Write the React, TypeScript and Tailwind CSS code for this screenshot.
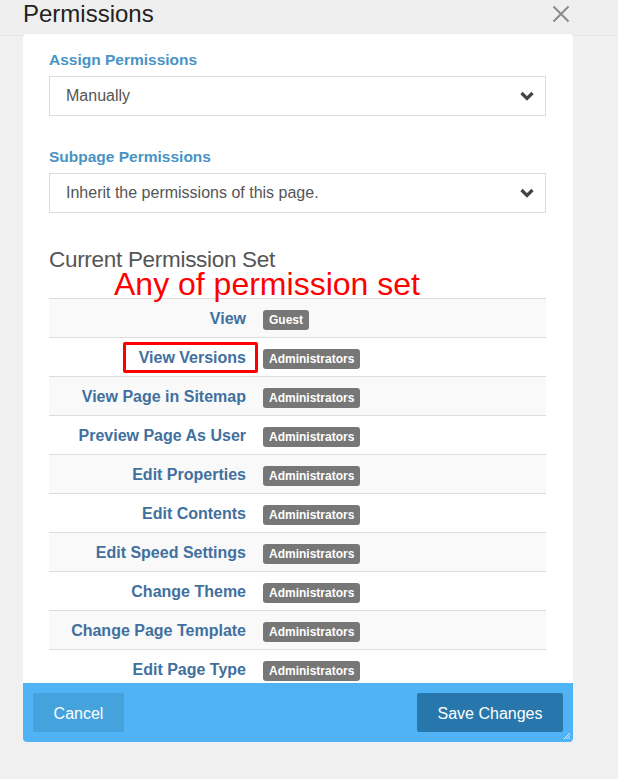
const rows = [
  { name: "View", group: "Guest" },
  { name: "View Versions", group: "Administrators", marked: true },
  { name: "View Page in Sitemap", group: "Administrators" },
  { name: "Preview Page As User", group: "Administrators" },
  { name: "Edit Properties", group: "Administrators" },
  { name: "Edit Contents", group: "Administrators" },
  { name: "Edit Speed Settings", group: "Administrators" },
  { name: "Change Theme", group: "Administrators" },
  { name: "Change Page Template", group: "Administrators" },
  { name: "Edit Page Type", group: "Administrators" },
];

const Chevron = () => (
  <svg width="14" height="10" viewBox="0 0 14 10" className="shrink-0">
    <polyline points="1.5,2 7,7.5 12.5,2" fill="none" stroke="#444" strokeWidth="3.2" strokeLinejoin="miter" />
  </svg>
);

const Select = ({ value }: { value: string }) => (
  <div className="flex h-[40px] items-center justify-between border border-[#dcdcdc] bg-white pl-[16px] pr-[11px] text-[16px] text-[#555]">
    <span>{value}</span>
    <Chevron />
  </div>
);

const App = () => {
  return (
    <div className="min-h-[779px] bg-[#f0f0f0] font-['Liberation_Sans',Arial,sans-serif]">
      <div className="flex h-[36px] items-start justify-between border-b border-[#e6e6e6] bg-[#efefef] pl-[23px] pr-[48px]">
        <h1 className="pt-[1px] text-[24px] leading-[26px] text-[#222]">Permissions</h1>
        <svg width="18" height="18" viewBox="0 0 18 18" className="mt-[5px]">
          <path d="M1.5 1.5 L16.5 16.5 M16.5 1.5 L1.5 16.5" stroke="#8a8a8a" strokeWidth="2" />
        </svg>
      </div>

      <div className="relative -mt-[2px] ml-[23px] w-[550px] rounded-[4px] bg-white">
        <div className="h-[649px] overflow-hidden px-[26px] pr-[27px] pt-[16px]">
          <label className="block text-[15.5px] font-bold leading-[20px] text-[#4893c4]">Assign Permissions</label>
          <div className="mt-[6px]">
            <Select value="Manually" />
          </div>

          <label className="mt-[31px] block text-[15.5px] font-bold leading-[20px] text-[#4893c4]">Subpage Permissions</label>
          <div className="mt-[6px]">
            <Select value="Inherit the permissions of this page." />
          </div>

          <div className="relative mt-[33px]">
            <h3 className="text-[22.5px] font-light leading-[28px] tracking-[-0.3px] text-[#555]">
              Current Permission Set
            </h3>
            <span className="absolute left-[65px] top-[20px] whitespace-nowrap text-[32px] leading-[36px] text-[#ff0000]">
              Any of permission set
            </span>
          </div>

          <div className="mt-[24px]">
            {rows.map((row, i) => (
              <div
                key={row.name}
                className={`flex h-[39px] items-center border-t border-[#dddddd] pt-[1px] ${i % 2 === 0 ? "bg-[#f9f9f9]" : "bg-white"}`}
              >
                <div className="w-[206px] pr-[9px] text-right text-[16px] font-bold text-[#41709e]">
                  <span className="relative">
                    {row.name}
                    {row.marked && (
                      <span className="absolute -bottom-[7px] -left-[16px] -right-[12px] -top-[7px] rounded-[2px] border-[3px] border-[#ff0000]" />
                    )}
                  </span>
                </div>
                <div className="pl-[8px]">
                  <span className="inline-block rounded-[3px] bg-[#777] px-[6px] py-[3px] text-[12px] font-bold leading-[14px] text-white">
                    {row.group}
                  </span>
                </div>
              </div>
            ))}
          </div>
        </div>

        <div className="relative flex h-[59px] items-start justify-between rounded-b-[4px] bg-[#4fb3f6] px-[10px] pt-[10px]">
          <button className="h-[39px] w-[91px] rounded-[2px] bg-[#44a2dd] pt-[2px] text-[16px] text-white">Cancel</button>
          <button className="h-[39px] w-[146px] rounded-[2px] bg-[#2777ad] pt-[2px] text-[16px] text-white">Save Changes</button>
          <svg width="8" height="8" viewBox="0 0 8 8" className="absolute bottom-[2px] right-[2px]">
            <path d="M7 1 L1 7 M7 3.5 L3.5 7 M7 6 L6 7" stroke="#ffffff" strokeWidth="1" opacity="0.8" />
          </svg>
        </div>
      </div>
    </div>
  );
};

export default App;
